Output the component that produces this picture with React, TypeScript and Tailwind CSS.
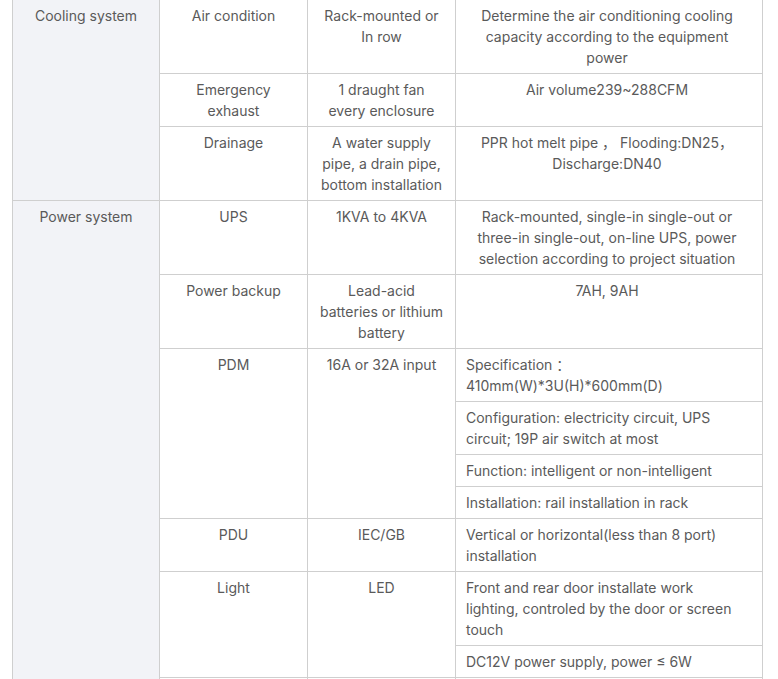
const cell = 'border border-[#cfcfcf] px-[10px] py-[5px] align-top'
const head = `${cell} bg-[#f2f3f7] text-center`
const mid = `${cell} text-center`
const wide = `${cell} pr-[14px] text-center`
const left = `${cell} pr-[14px] text-left`

export default function App() {
  return (
    <div className="min-h-screen bg-white pl-[12px] overflow-hidden">
      <table
        className="-mt-px w-[750px] table-fixed border-collapse text-[14px] leading-[21px] text-[#5a5a5a]"
        style={{ fontFamily: 'Inter, "Noto Sans", "Noto Sans CJK SC", sans-serif' }}
      >
        <colgroup>
          <col className="w-[147px]" />
          <col className="w-[148px]" />
          <col className="w-[148px]" />
          <col className="w-[307px]" />
        </colgroup>
        <tbody>
          <tr>
            <td rowSpan={3} className={head}>Cooling system</td>
            <td className={mid}>Air condition</td>
            <td className={mid}>Rack-mounted or In row</td>
            <td className={wide}>Determine the air conditioning cooling capacity according to the equipment power</td>
          </tr>
          <tr>
            <td className={mid}>Emergency exhaust</td>
            <td className={mid}>1 draught fan every enclosure</td>
            <td className={wide}>Air volume239~288CFM</td>
          </tr>
          <tr>
            <td className={mid}>Drainage</td>
            <td className={mid}>A water supply pipe, a drain pipe, bottom installation</td>
            <td className={wide}>PPR hot melt pipe ， Flooding:DN25，Discharge:DN40</td>
          </tr>

          <tr>
            <td rowSpan={10} className={head}>Power system</td>
            <td className={mid}>UPS</td>
            <td className={mid}>1KVA to 4KVA</td>
            <td className={wide}>Rack-mounted, single-in single-out or three-in single-out, on-line UPS, power selection according to project situation</td>
          </tr>
          <tr>
            <td className={mid}>Power backup</td>
            <td className={mid}>Lead-acid batteries or lithium battery</td>
            <td className={wide}>7AH, 9AH</td>
          </tr>
          <tr>
            <td rowSpan={4} className={mid}>PDM</td>
            <td rowSpan={4} className={mid}>16A or 32A input</td>
            <td className={left}>Specification ：<br />410mm(W)*3U(H)*600mm(D)</td>
          </tr>
          <tr>
            <td className={left}>Configuration: electricity circuit, UPS circuit; 19P air switch at most</td>
          </tr>
          <tr>
            <td className={left}>Function: intelligent or non-intelligent</td>
          </tr>
          <tr>
            <td className={left}>Installation: rail installation in rack</td>
          </tr>
          <tr>
            <td className={mid}>PDU</td>
            <td className={mid}>IEC/GB</td>
            <td className={left}>Vertical or horizontal(less than 8 port) installation</td>
          </tr>
          <tr>
            <td rowSpan={2} className={mid}>Light</td>
            <td rowSpan={2} className={mid}>LED</td>
            <td className={left}>Front and rear door installate work lighting, controled by the door or screen touch</td>
          </tr>
          <tr>
            <td className={left}>DC12V power supply, power ≤ 6W</td>
          </tr>
          <tr>
            <td className={mid}>&nbsp;</td>
            <td className={mid}>&nbsp;</td>
            <td className={left}>&nbsp;</td>
          </tr>
        </tbody>
      </table>
    </div>
  )
}
